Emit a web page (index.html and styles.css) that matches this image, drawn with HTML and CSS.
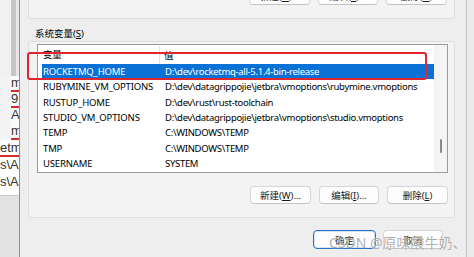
FILE: index.html
```html
<!DOCTYPE html>
<html lang="zh-CN">
<head>
  <meta charset="UTF-8">
  <title>环境变量</title>
  <link rel="stylesheet" href="styles.css">
</head>
<body>
  <div class="screen">
    <!-- window behind the dialog -->
    <div class="behind">
      <div class="bk-top"><span class="bk-a"></span><span class="bk-band"></span><span class="bk-c"></span></div>
      <div class="bk-mid">
        <div class="bk-gutter"></div>
        <div class="bk-frag">
          <div class="bk-line red">m</div>
          <div class="bk-line red">9.</div>
          <div class="bk-line">Ac</div>
          <div class="bk-line red">m</div>
        </div>
      </div>
      <div class="bk-rows">
        <div class="bk-row red">etm</div>
        <div class="bk-row">s\Ac</div>
        <div class="bk-row">s\Ac</div>
      </div>
      <div class="bk-rest"></div>
    </div>

    <div class="dialog">
      <div class="group group-top">
        <div class="btns">
          <button class="btn">新建(<u>N</u>)...</button>
          <button class="btn">编辑(<u>E</u>)...</button>
          <button class="btn">删除(<u>D</u>)</button>
        </div>
      </div>

      <div class="caption">系统变量(<u>S</u>)</div>

      <div class="group group-sys">
        <div class="list">
          <div class="list-body">
            <div class="row head"><span class="c1">变量</span><span class="c2">值</span></div>
            <div class="row sel"><span class="c1">ROCKETMQ_HOME</span><span class="c2">D:\dev\rocketmq-all-5.1.4-bin-release</span></div>
            <div class="row"><span class="c1">RUBYMINE_VM_OPTIONS</span><span class="c2">D:\dev\datagrippojie\jetbra\vmoptions\rubymine.vmoptions</span></div>
            <div class="row"><span class="c1">RUSTUP_HOME</span><span class="c2">D:\dev\rust\rust-toolchain</span></div>
            <div class="row"><span class="c1">STUDIO_VM_OPTIONS</span><span class="c2">D:\dev\datagrippojie\jetbra\vmoptions\studio.vmoptions</span></div>
            <div class="row"><span class="c1">TEMP</span><span class="c2">C:\WINDOWS\TEMP</span></div>
            <div class="row"><span class="c1">TMP</span><span class="c2">C:\WINDOWS\TEMP</span></div>
            <div class="row"><span class="c1">USERNAME</span><span class="c2">SYSTEM</span></div>
          </div>
          <div class="vscroll"><span class="thumb"></span></div>
        </div>
        <div class="btns">
          <button class="btn">新建(<u>W</u>)...</button>
          <button class="btn">编辑(<u>I</u>)...</button>
          <button class="btn">删除(<u>L</u>)</button>
        </div>
      </div>

      <div class="footer">
        <button class="btn ok">确定</button>
        <button class="btn cancel">取消</button>
      </div>
    </div>
    <div class="outside"></div>

    <div class="mark-box"></div>
    <div class="watermark">CSDN @原味酸牛奶、</div>
  </div>
</body>
</html>
```

FILE: styles.css
```css
* { box-sizing: border-box; }
body { margin: 0; background: #ececec; font-family: "Noto Sans", "Noto Sans CJK SC", sans-serif; color: #000; }
.screen { position: relative; width: 474px; height: 257px; display: flex; overflow: hidden; }

/* background window strip */
.behind { width: 20px; flex: none; display: flex; flex-direction: column; border-right: 1px solid #8e8e8e; background: #e4e4e4; font-family: "Liberation Sans", sans-serif; font-size: 13px; color: #333; }
.bk-top { height: 76px; display: flex; }
.bk-a { width: 11px; background: #f1f1f1; }
.bk-band { width: 5px; background: #c6c6c6; }
.bk-c { flex: 1; background: #e7e7e7; }
.bk-mid { height: 64px; display: flex; }
.bk-gutter { width: 11px; background: #f4f4f4; }
.bk-frag { flex: 1; background: #fafafa; overflow: hidden; }
.bk-line { height: 16px; line-height: 14px; white-space: nowrap; overflow: hidden; position: relative; }
.bk-rows { background: #fff; border-bottom: 1px solid #c9c9c9; padding-bottom: 4px; }
.bk-row { height: 17px; line-height: 15px; white-space: nowrap; overflow: hidden; position: relative; }
.red::after { content: ""; position: absolute; left: 0; right: 0; bottom: 0; height: 2px; background: #d52b2b; }
.bk-rest { flex: 1; background: #e3e3e3; }

/* dialog */
.dialog { width: 447px; flex: none; background: #eeeeee; border-right: 1px solid #c4c4c4; padding: 0 11px 0 8px; font-size: 9.5px; }
.outside { flex: 1; background: #ebebeb; }
.group { border: 1px solid #dedede; border-radius: 3px; background: #f3f3f3; }
.group-top { margin-top: -14px; padding: 0 7px 13px; }
.btns { display: flex; justify-content: flex-end; gap: 8px; }
.btn { width: 61px; height: 18px; padding: 0; border: 1px solid #d6d6d6; border-bottom-color: #c3c3c3; border-radius: 4px; background: #fdfdfd; font: inherit; font-size: 9.5px; color: #1a1a1a; }
.btns .btn:nth-child(2) { width: 60px; }
.caption { height: 22px; padding: 7px 0 0 7px; }
.group-sys { padding: 2px 6px 13px 8px; }
.list { height: 129px; display: flex; border: 1px solid #9b9b9b; background: #fff; margin-bottom: 13px; }
.list-body { flex: 1; padding-left: 4px; letter-spacing: -0.15px; }
.row { display: flex; align-items: center; height: 15.33px; white-space: nowrap; }
.c1 { width: 123px; padding-left: 1px; flex: none; }
.c2 { letter-spacing: -0.3px; }
.head { height: 19px; }
.head .c1 { width: 118px; border-right: 1px solid #e3e3e3; height: 18px; line-height: 18px; margin-right: 4px; }
.sel { background: #0a72d6; color: #fff; }
.vscroll { width: 13px; background: #f4f4f4; position: relative; }
.thumb { position: absolute; left: 6px; top: 94px; width: 2px; height: 14px; background: #8a8a8a; border-radius: 1px; }

.footer { display: flex; justify-content: flex-end; gap: 7px; padding: 12px 12px 0 0; }
.footer .btn { height: 19px; }
.ok { width: 63px; border-color: #2c72c4; box-shadow: inset 0 0 0 1px #d6e5f6; }
.cancel { width: 60px; }

/* overlays */
.mark-box { position: absolute; left: 27px; top: 52px; width: 400px; height: 28px; border: 2px solid #e1262d; border-radius: 3px; }
.watermark { position: absolute; left: 329px; top: 232px; font-size: 14px; color: rgba(120, 120, 120, 0.6); text-shadow: 0 0 1px #fff; white-space: nowrap; }
```
